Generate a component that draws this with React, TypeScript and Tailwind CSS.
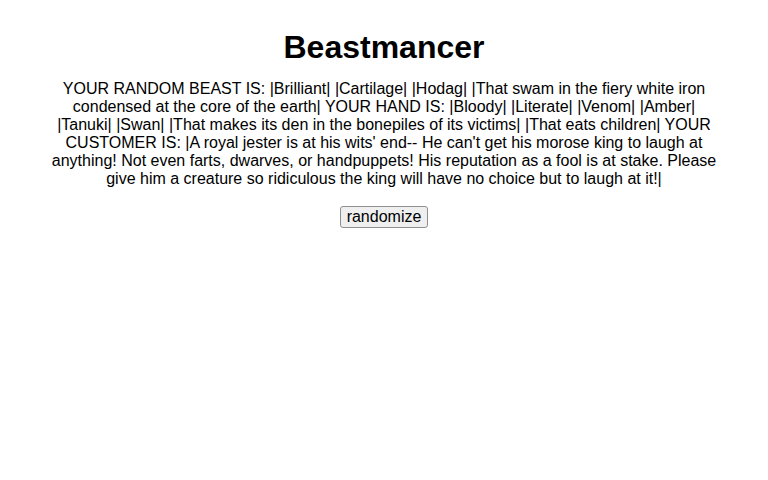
import { useState } from 'react';

const beast = 'YOUR RANDOM BEAST IS: |Brilliant| |Cartilage| |Hodag| |That swam in the fiery white iron condensed at the core of the earth|';
const hand = 'YOUR HAND IS: |Bloody| |Literate| |Venom| |Amber| |Tanuki| |Swan| |That makes its den in the bonepiles of its victims| |That eats children|';
const customer =
  "YOUR CUSTOMER IS: |A royal jester is at his wits' end-- He can't get his morose king to laugh at anything! Not even farts, dwarves, or handpuppets! His reputation as a fool is at stake. Please give him a creature so ridiculous the king will have no choice but to laugh at it!|";

export default function App() {
  const [prompt] = useState(`${beast} ${hand} ${customer}`);

  return (
    <div className="min-h-[480px] bg-white p-2 text-center font-['Liberation_Sans',Arial,sans-serif] text-black">
      <h1 className="mt-[21.44px] mb-[14px] text-[32px] font-bold leading-[normal]">Beastmancer</h1>
      <p className="mx-auto max-w-[672px] text-base leading-[18px]">{prompt}</p>
      <button
        type="button"
        className="mt-[18px] rounded-[3px] border border-[#8f8f8f] bg-[#efefef] px-[6px] py-px text-base leading-[18px] hover:bg-[#e5e5e5]"
      >
        randomize
      </button>
    </div>
  );
}
